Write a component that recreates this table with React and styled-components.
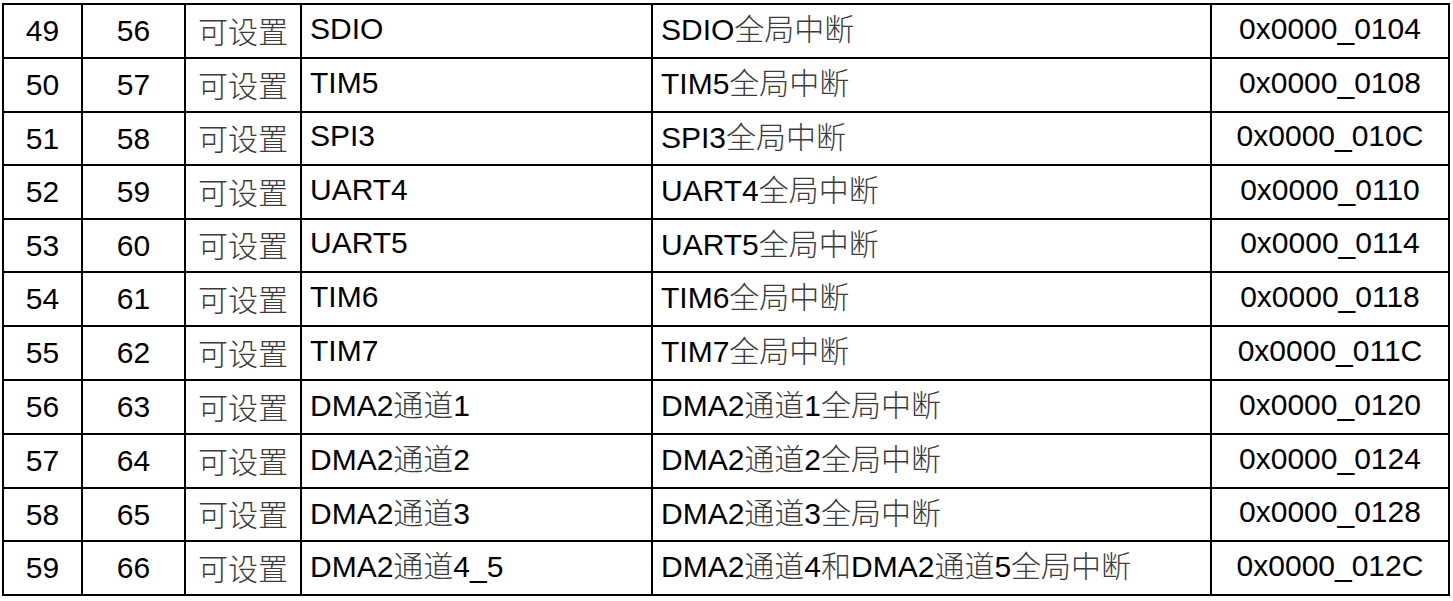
import React from 'react'
import styled, { createGlobalStyle } from "styled-components";

const GlobalStyle = createGlobalStyle`
  html, body {
    margin: 0;
    padding: 0;
    background: #ffffff;
  }
`;

const Page = styled.div`
  padding: 3px 0 0 2px;
  font-family: "Liberation Sans", Arial, "Noto Sans CJK SC", sans-serif;
  font-size: 30px;
  color: #000000;
`;

const Table = styled.table`
  table-layout: fixed;
  width: 1448px;
  border-collapse: separate;
  border-spacing: 0;
  border-left: 2px solid #000;
  border-top: 2px solid #000;
`;

const Col = styled.col`
  width: ${p => p.$w}px;
`;

const Row = styled.tr`
  height: ${p => p.$h}px;
`;

const Cell = styled.td`
  box-sizing: border-box;
  height: ${p => p.$h}px;
  border-right: 2px solid #000;
  border-bottom: 2px solid #000;
  padding: ${p => (p.$raised ? "0 0 5px" : "0")};
  padding-left: ${p => (p.$align === "left" ? "8px" : "0")};
  text-align: ${p => (p.$align === "left" ? "left" : "center")};
  vertical-align: middle;
  white-space: nowrap;
  line-height: 1;
`;

const Han = styled.span`
  font-family: "Noto Sans CJK SC", sans-serif;
  font-weight: 300;
  color: #3c3c3c;
`;

const widths = [79, 103, 116, 351, 559, 238];
const heights = [54, 54, 53, 54, 53, 54, 54, 54, 54, 53, 54];

const rows = [
  ["49", "56", "SDIO", "SDIO全局中断", "0x0000_0104"],
  ["50", "57", "TIM5", "TIM5全局中断", "0x0000_0108"],
  ["51", "58", "SPI3", "SPI3全局中断", "0x0000_010C"],
  ["52", "59", "UART4", "UART4全局中断", "0x0000_0110"],
  ["53", "60", "UART5", "UART5全局中断", "0x0000_0114"],
  ["54", "61", "TIM6", "TIM6全局中断", "0x0000_0118"],
  ["55", "62", "TIM7", "TIM7全局中断", "0x0000_011C"],
  ["56", "63", "DMA2通道1", "DMA2通道1全局中断", "0x0000_0120"],
  ["57", "64", "DMA2通道2", "DMA2通道2全局中断", "0x0000_0124"],
  ["58", "65", "DMA2通道3", "DMA2通道3全局中断", "0x0000_0128"],
  ["59", "66", "DMA2通道4_5", "DMA2通道4和DMA2通道5全局中断", "0x0000_012C"],
];

// split mixed text so the Chinese runs get their own font and tone
function Mixed({ text }) {
  const parts = text.split(/([\u4e00-\u9fff]+)/).filter(Boolean);
  return parts.map((part, i) =>
    /[\u4e00-\u9fff]/.test(part) ? <Han key={i}>{part}</Han> : <span key={i}>{part}</span>
  );
}

export default function App() {
  return (
    <Page>
      <GlobalStyle />
      <Table>
        <colgroup>
          {widths.map((w, i) => <Col key={i} $w={w} />)}
        </colgroup>
        <tbody>
          {rows.map(([pos, prio, name, desc, addr], i) => (
            <Row key={pos} $h={heights[i]}>
              <Cell $h={heights[i]}>{pos}</Cell>
              <Cell $h={heights[i]}>{prio}</Cell>
              <Cell $h={heights[i]}><Han>可设置</Han></Cell>
              <Cell $h={heights[i]} $align="left" $raised><Mixed text={name} /></Cell>
              <Cell $h={heights[i]} $align="left" $raised><Mixed text={desc} /></Cell>
              <Cell $h={heights[i]} $raised>{addr}</Cell>
            </Row>
          ))}
        </tbody>
      </Table>
    </Page>
  )
}
